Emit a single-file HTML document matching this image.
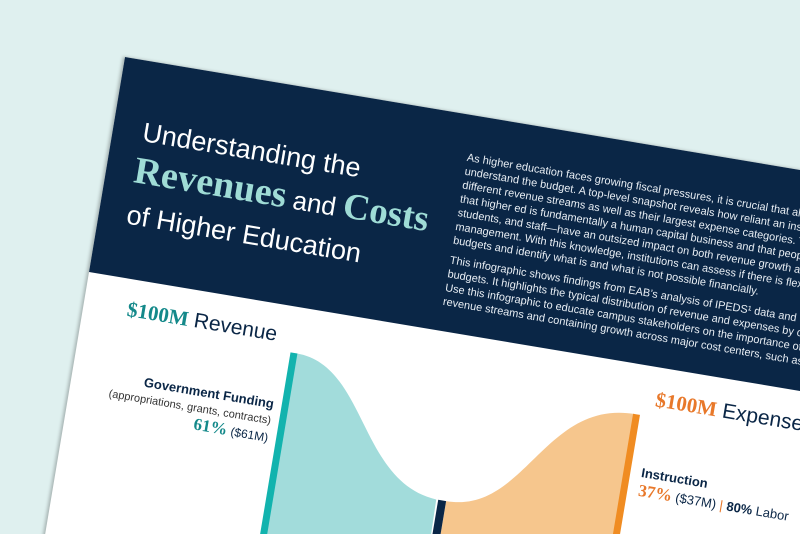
<!DOCTYPE html>
<html><head><meta charset="utf-8"><style>
html,body{margin:0;padding:0;width:800px;height:534px;overflow:hidden;background:#dff0ef;}
#wrap{position:absolute;left:0;top:0;width:800px;height:534px;overflow:hidden;}
#doc{position:absolute;left:125px;top:57px;width:1000px;height:600px;background:#fff;transform-origin:0 0;transform:rotate(9.5deg);box-shadow:-2px 0 3px rgba(0,0,0,.25);font-family:"Liberation Sans",sans-serif;}
#hdr{position:absolute;left:0;top:0;width:1000px;height:218px;background:#0a2646;}
.t{position:absolute;color:#fff;white-space:nowrap;}
.p{position:absolute;left:354px;width:640px;color:#e8eef4;font-size:11px;line-height:14px;white-space:nowrap;}
.slab{font-family:"Liberation Serif",serif;font-weight:bold;}
</style></head><body>
<div id="wrap">
<div id="doc">
<div id="hdr"></div>
<div class="t" style="left:30px;top:56px;font-size:27px;">Understanding the</div>
<div class="t" style="left:28px;top:88px;font-size:26px;"><span class="slab" style="color:#9fdcd6;font-size:38px;">Revenues</span> and <span class="slab" style="color:#9fdcd6;font-size:37px;">Costs</span></div>
<div class="t" style="left:28px;top:140px;font-size:27px;">of Higher Education</div>
<div class="p" style="top:36px;">As higher education faces growing fiscal pressures, it is crucial that all stakeholders<br>understand the budget. A top-level snapshot reveals how reliant an institution is on<br>different revenue streams as well as their largest expense categories. This shows<br>that higher ed is fundamentally a human capital business and that people—faculty,<br>students, and staff—have an outsized impact on both revenue growth and expense<br>management. With this knowledge, institutions can assess if there is flexibility in their<br>budgets and identify what is and what is not possible financially.</div>
<div class="p" style="top:140px;">This infographic shows findings from EAB’s analysis of IPEDS¹ data and university<br>budgets. It highlights the typical distribution of revenue and expenses by category.<br>Use this infographic to educate campus stakeholders on the importance of various<br>revenue streams and containing growth across major cost centers, such as labor.</div>
<div style="position:absolute;left:44px;top:236px;font-size:21px;color:#0a2646;white-space:nowrap;"><span class="slab" style="color:#14898a;">$100M</span> Revenue</div>
<div style="position:absolute;left:580px;top:238px;font-size:21px;color:#0a2646;white-space:nowrap;"><span class="slab" style="color:#e8782a;">$100M</span> Expenses</div>
<svg style="position:absolute;left:0;top:0" width="1000" height="600">
<path d="M218 264 C290 264 300 380 380 385 L384 600 L218 600 Z" fill="#a2dcdb"/>
<path d="M390 385 C470 385 470 268 562 268 L562 600 L390 600 Z" fill="#f6c68d"/>
<rect x="212" y="264" width="7" height="336" fill="#12b3ae"/>
<rect x="382" y="385" width="8" height="215" fill="#0a2646"/>
<rect x="560" y="268" width="7" height="332" fill="#f08c22"/>
</svg>
<div style="position:absolute;left:0;width:204px;top:310px;text-align:right;color:#0a2646;font-size:13px;line-height:16px;">
<b>Government Funding</b><br><span style="font-size:11px;color:#333">(appropriations, grants, contracts)</span><br><span class="slab" style="color:#14898a;font-size:17px;">61%</span> <span style="font-size:12px">($61M)</span></div>
<div style="position:absolute;left:578px;top:316px;color:#0a2646;font-size:13px;line-height:18px;white-space:nowrap;">
<b>Instruction</b><br><span class="slab" style="color:#e8782a;font-size:17px;">37%</span> ($37M) <span style="color:#e8782a">|</span> <b>80%</b> Labor</div>
</div>
</div>
</body></html>
